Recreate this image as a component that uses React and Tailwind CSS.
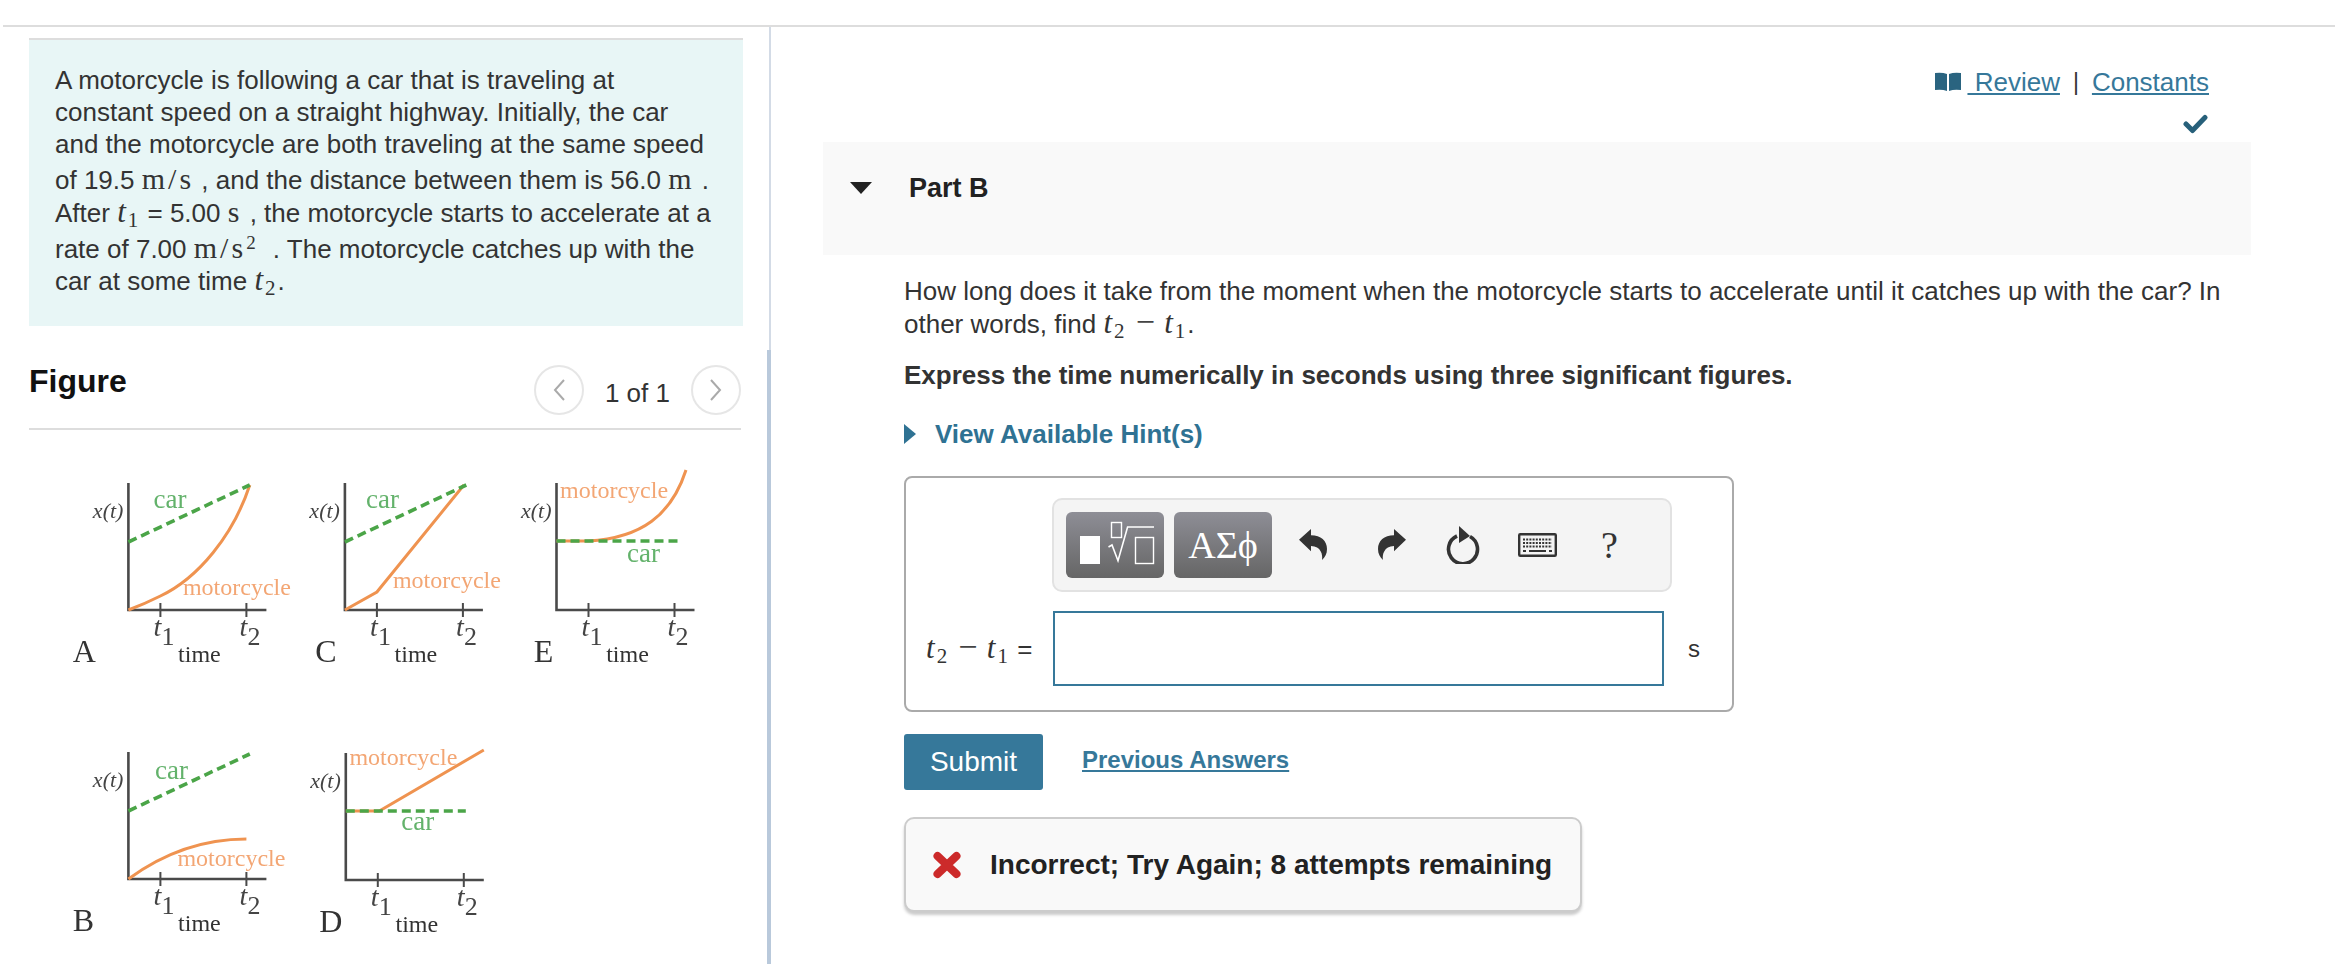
const serif = "font-['Liberation_Serif',serif]";

// t with a subscript, as the math bits in the question text
const T = ({ n }) => (
  <span className={`${serif} whitespace-nowrap`}>
    <i className="text-[31px]">t</i>
    <span className="text-[21px] relative top-[5px] ml-[2px] mr-[2px]">{n}</span>
  </span>
);

const Minus = () => <span className={`${serif} mx-[2px] text-[34px] leading-[20px] text-[#444]`}>&minus;</span>;

const Unit = ({ children }) => <span className={`${serif} text-[30px] tracking-[3px]`}>{children}</span>;

const Undo = ({ flip }) => (
  <svg width="29" height="32" viewBox="0 0 29 32" className={flip ? "-scale-x-100" : ""}>
    <path d="M0 10.7 L12 0 V6.3 C22 6.3 28 12 28 20 C28 25 26 28 23 31 C24 26 22 17 12 17 V22.3 Z" fill="#333" />
  </svg>
);

const Keyboard = () => (
  <svg width="39" height="24" viewBox="0 0 39 24">
    <rect x="1.2" y="1.2" width="36.6" height="21.6" rx="1" fill="#f4f4f4" stroke="#333" strokeWidth="2.4" />
    <path d="M5 6.5 H34 M5 10 H34 M5 13.5 H34" stroke="#333" strokeWidth="2" strokeDasharray="2 1.2" />
    <path d="M5 18 H8 M11 18 H28 M31 18 H34" stroke="#333" strokeWidth="2" />
  </svg>
);

// one of the five small graphs, drawn around the corner of its axes
const Graph = ({ x, y, letter, letterX, carD, carX, carY, motoD, motoX, motoY, top = -127, right = 138, t1 = 32, t2 = 118 }) => (
  <g transform={`translate(${x} ${y})`}>
    <path d={`M0 ${top} V0 H${right}`} fill="none" stroke="#4a4a4a" strokeWidth="2.6" />
    <path d={`M${t1} -7 V7 M${t2} -7 V7`} stroke="#4a4a4a" strokeWidth="2" />
    <path d={motoD} fill="none" stroke="#ef9350" strokeWidth="3" />
    <path d={carD} fill="none" stroke="#4ba548" strokeWidth="3.6" strokeDasharray="9 5" />
    <text x={carX} y={carY} textAnchor="middle" fontSize="27" fill="#63b26b">car</text>
    <text x={motoX} y={motoY} fontSize="24" fill="#f3a674">motorcycle</text>
    <text x="-5" y="-92" textAnchor="end" fontSize="22" fontStyle="italic" fill="#444">x(t)</text>
    <text x={t1 - 7} y="26" fontSize="28" fontStyle="italic" fill="#444">t</text>
    <text x={t1 + 1} y="35" fontSize="26" fill="#444">1</text>
    <text x={t2 - 7} y="26" fontSize="28" fontStyle="italic" fill="#444">t</text>
    <text x={t2 + 1} y="35" fontSize="26" fill="#444">2</text>
    <text x="71" y="52" textAnchor="middle" fontSize="24" fill="#333">time</text>
    <text x={letterX} y="52" textAnchor="middle" fontSize="32" fill="#333">{letter}</text>
  </g>
);

const Figure = () => (
  <svg width="700" height="500" viewBox="40 450 700 500" className={`blur-[0.5px] mt-[20px] ml-[11px] ${serif}`}>
    <Graph x={128.4} y={610} letter="A" letterX={-44} carD="M0 -68 L121.4 -125" carX={41.5} carY={-102}
      motoD="M0 0 Q16 -6 32 -14 C70 -32 105 -75 121.4 -125" motoX={54.5} motoY={-15} />
    <Graph x={344.9} y={610} letter="C" letterX={-19} carD="M0 -68 L121.4 -125" carX={37.5} carY={-102}
      motoD="M0 0 L32 -18 L119 -125" motoX={48} motoY={-22} />
    <Graph x={556.5} y={610} letter="E" letterX={-13} carD="M0 -69 H121" carX={87} carY={-48}
      motoD="M0 -69 Q18 -69 32 -69 C85 -72 115 -95 129.5 -140" motoX={3.6} motoY={-112} />
    <Graph x={128.4} y={879} letter="B" letterX={-45} carD="M0 -68 L121.4 -125" carX={43} carY={-100}
      motoD="M0 0 C30 -22 70 -40 118 -40" motoX={49} motoY={-13} />
    <Graph x={345.8} y={880} letter="D" letterX={-15} carD="M0 -69 H120" carX={72} carY={-50}
      motoD="M0 -69 H33.5 L138 -130" motoX={3.6} motoY={-115} />
  </svg>
);

const App = () => {
  return (
    <div className="h-screen overflow-hidden bg-white pt-[25px] font-['Liberation_Sans',sans-serif] text-[26px] text-[#333]">
      <div className="ml-[3px] h-[2px] bg-[#dddddd]" />
      <div className="flex h-[937px]">
        {/* left: problem text and figure */}
        <div className="w-[765px] shrink-0 pl-[29px]">
          <div className="mt-[11px] h-[288px] w-[714px] border-t-2 border-[#dddddd] bg-[#e8f6f6] px-[26px] pt-[24px] leading-[32px]">
            <div className="h-[32px] whitespace-nowrap">A motorcycle is following a car that is traveling at</div>
            <div className="h-[32px] whitespace-nowrap">constant speed on a straight highway. Initially, the car</div>
            <div className="h-[32px] whitespace-nowrap">and the motorcycle are both traveling at the same speed</div>
            <div className="h-[36px] whitespace-nowrap pt-[3px]">of 19.5 <Unit>m/s</Unit> , and the distance between them is 56.0 <Unit>m</Unit> .</div>
            <div className="h-[32px] whitespace-nowrap">After <T n="1" /> = 5.00 <Unit>s</Unit> , the motorcycle starts to accelerate at a</div>
            <div className="h-[36px] whitespace-nowrap pt-[4px]">rate of 7.00 <Unit>m/s<sup className="text-[19px]">2</sup></Unit><span className="ml-[7px]"> . The motorcycle catches up with the</span></div>
            <div className="h-[32px] whitespace-nowrap">car at some time <T n="2" />.</div>
          </div>

          <div className="mt-[37px] flex h-[67px] w-[712px] items-start justify-between border-b-2 border-[#dddddd]">
            <h2 className="text-[32px] font-bold leading-[36px] text-[#111]">Figure</h2>
            <div className="flex items-start pt-[2px]">
              <button className="flex h-[50px] w-[50px] items-center justify-center rounded-full border-2 border-[#e6e6e6] text-[#999]">
                <svg width="14" height="24" viewBox="0 0 14 24"><path d="M12 2 L3 12 L12 22" fill="none" stroke="#aaa" strokeWidth="2" /></svg>
              </button>
              <span className="mx-[21px] leading-[56px]">1 of 1</span>
              <button className="flex h-[50px] w-[50px] items-center justify-center rounded-full border-2 border-[#e6e6e6]">
                <svg width="14" height="24" viewBox="0 0 14 24"><path d="M2 2 L11 12 L2 22" fill="none" stroke="#aaa" strokeWidth="2" /></svg>
              </button>
            </div>
          </div>

          <Figure />
        </div>

        {/* divider, the lower part is the scroll thumb */}
        <div className="flex w-[6px] shrink-0 flex-col items-end">
          <div className="h-[323px] w-[2px] bg-[#d3dbe6]" />
          <div className="w-[4px] flex-1 bg-[#b9c9db]" />
        </div>

        {/* right: the question */}
        <div className="min-w-0 flex-1 pl-[52px]">
          <div className="mt-[39px] flex h-[32px] items-center justify-end pr-[126px] leading-[32px]">
            <svg width="26" height="20" viewBox="0 0 26 20" className="mr-[6px]">
              <path d="M0 1 Q7 0 12 2 V19 Q7 17 0 18 Z M14 2 Q19 0 26 1 V18 Q19 17 14 19 Z" fill="#2a6480" />
            </svg>
            <a href="#" className="text-[#36789a] underline">&nbsp;Review</a>
            <span className="mx-[13px] text-[23px]">|</span>
            <a href="#" className="text-[#36789a] underline">Constants</a>
          </div>
          <div className="mt-[16px] flex h-[20px] justify-end pr-[127px]">
            <svg width="25" height="20" viewBox="0 0 25 20">
              <path d="M3 10 L9.5 16.5 L22 3.5" fill="none" stroke="#27607a" strokeWidth="5" strokeLinejoin="round" strokeLinecap="round" />
            </svg>
          </div>

          <div className="mt-[8px] h-[113px] w-[1428px] bg-[#f9f9f9]">
            <div className="flex h-[92px] items-center pl-[27px]">
              <svg width="22" height="12" viewBox="0 0 22 12"><path d="M0 0 H22 L11 12 Z" fill="#222" /></svg>
              <span className="ml-[37px] text-[27px] font-bold text-[#222]">Part B</span>
            </div>
          </div>

          <div className="ml-[81px]">
            <p className="mt-[20px] leading-[32px]">
              <span className="block whitespace-nowrap">How long does it take from the moment when the motorcycle starts to accelerate until it catches up with the car? In</span>
              <span className="block whitespace-nowrap">other words, find <T n="2" /> <Minus /> <T n="1" />.</span>
            </p>
            <p className="mt-[17px] font-bold leading-[32px]">Express the time numerically in seconds using three significant figures.</p>
            <div className="mt-[27px] flex h-[32px] items-center">
              <svg width="12" height="20" viewBox="0 0 12 20"><path d="M0 0 L12 10 L0 20 Z" fill="#2f7293" /></svg>
              <a href="#" className="ml-[19px] font-bold text-[#2f7293]">View Available Hint(s)</a>
            </div>

            <div className="mt-[26px] h-[236px] w-[830px] rounded-[8px] border-2 border-[#aaaaaa] pt-[20px]">
              <div className="ml-[146px] flex h-[94px] w-[620px] items-center rounded-[10px] border-2 border-[#e2e2e2] bg-[#f4f4f4] pl-[12px]">
                <button className="h-[66px] w-[98px] shrink-0 rounded-[6px] bg-gradient-to-b from-[#8e8e96] to-[#666666]">
                  <svg width="98" height="66" viewBox="0 0 98 66">
                    <rect x="14" y="24" width="20" height="28" fill="#fff" />
                    <rect x="45.5" y="10.5" width="10" height="15" fill="none" stroke="#fff" strokeWidth="1.4" />
                    <path d="M42.5 35 L46 33 L52 48.7 L61.6 15 H88" fill="none" stroke="#fff" strokeWidth="1.6" />
                    <rect x="69.5" y="25.5" width="18" height="26" fill="none" stroke="#fff" strokeWidth="1.4" />
                  </svg>
                </button>
                <button className={`ml-[10px] h-[66px] w-[98px] shrink-0 rounded-[6px] bg-gradient-to-b from-[#8e8e96] to-[#666666] text-[38px] leading-[62px] text-white ${serif}`}>
                  ΑΣϕ
                </button>
                <span className="ml-[27px]"><Undo /></span>
                <span className="ml-[49px]"><Undo flip /></span>
                <svg width="36" height="38" viewBox="0 0 36 38" className="ml-[39px]">
                  <path d="M12 10 A14.5 14.5 0 1 0 25 10.5" fill="none" stroke="#333" strokeWidth="3.6" />
                  <path d="M14 0 L25 10 L14 17 Z" fill="#333" />
                </svg>
                <span className="ml-[37px]"><Keyboard /></span>
                <span className={`ml-[44px] text-[38px] leading-[44px] text-[#333] ${serif}`}>?</span>
              </div>

              <div className="mt-[19px] flex items-center">
                <label className="w-[147px] shrink-0 pl-[20px] whitespace-nowrap">
                  <T n="2" /> <Minus /> <T n="1" /> <span>=</span>
                </label>
                <input className="h-[75px] w-[611px] shrink-0 border-2 border-[#36789a] bg-white outline-none" />
                <span className="ml-[24px] text-[24px]">s</span>
              </div>
            </div>

            <div className="mt-[22px] flex items-start">
              <button className="h-[56px] w-[139px] rounded-[3px] bg-[#36789a] text-[28px] text-white">Submit</button>
              <a href="#" className="ml-[39px] mt-[10px] text-[24px] font-bold leading-[32px] text-[#36789a] underline">Previous Answers</a>
            </div>

            <div className="mt-[27px] flex h-[95px] w-[678px] items-center rounded-[10px] border-2 border-[#cccccc] bg-[#f9f9f9] pl-[26px] shadow-[0_3px_3px_#cccccc]">
              <svg width="30" height="28" viewBox="0 0 30 28" className="shrink-0">
                <path d="M5.5 5 L24.5 23 M24.5 5 L5.5 23" stroke="#cc2a2a" strokeWidth="8" strokeLinecap="round" />
              </svg>
              <span className="ml-[28px] whitespace-nowrap text-[28px] font-bold text-[#222]">Incorrect; Try Again; 8 attempts remaining</span>
            </div>
          </div>
        </div>
      </div>
    </div>
  );
};

export default App;
